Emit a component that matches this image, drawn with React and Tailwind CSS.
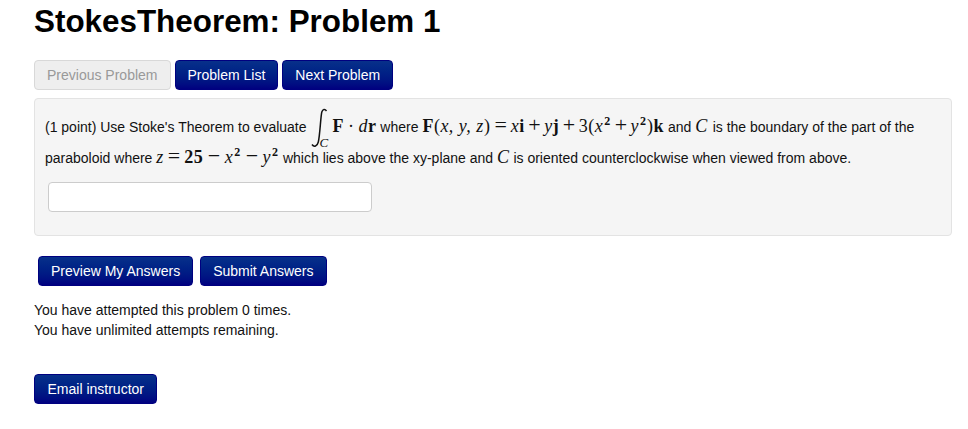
const Btn = ({ children, className = "" }) => (
  <button className={`h-[30px] rounded-[4px] border border-[#000080] bg-gradient-to-b from-[#08308a] to-[#000080] px-3 text-[14px] text-white ${className}`}>
    {children}
  </button>
);

const M = ({ children, className = "" }) => <span className={`font-['Liberation_Serif',serif] text-[18px] tracking-[0.5px] italic ${className}`}>{children}</span>;
const B = ({ children }) => <span className="font-['Liberation_Serif',serif] text-[18px] tracking-[0.5px] font-bold">{children}</span>;
const R = ({ children, className = "" }) => <span className={`font-['Liberation_Serif',serif] text-[18px] tracking-[0.5px] ${className}`}>{children}</span>;
const Op = ({ children, className = "mx-[4px]" }) => <span className={`font-['Liberation_Serif',serif] text-[22px] leading-none ${className}`}>{children}</span>;
const Sup = ({ children }) => <sup className="top-[-7px] pr-[1px] pl-[1px] font-['Liberation_Serif',serif] text-[12px] font-bold leading-none">{children}</sup>;

const Integral = () => (
  <span className="relative inline-block h-[1px] w-[22px]">
    <svg className="absolute bottom-[-16px] left-0" width="19" height="40" viewBox="0 0 19 40" fill="none" stroke="#111111">
      <path d="M16.5 3 C15 0.8 12.8 1 11.8 4 C10.6 9 10 27 8.3 34 C7.2 38.5 4 39.5 2 36.5" strokeWidth="1.5" />
    </svg>
    <span className="absolute bottom-[-17px] left-[9px] font-['Liberation_Serif',serif] text-[13px] italic leading-none">C</span>
  </span>
);

const App = () => {
  return (
    <div className="h-[429px] overflow-hidden bg-white pl-[34px] pr-4 font-['Liberation_Sans',Arial,sans-serif] text-[14px] text-[#111111]">
      <h1 className="pt-[2px] text-[31.4px] leading-[40px] font-bold text-black">StokesTheorem: Problem 1</h1>

      <div className="mt-[18px] flex gap-1">
        <button className="h-[30px] rounded-[4px] border border-[#d8d8d8] bg-[#eeeeee] px-3 text-[14px] text-[#999999]">Previous Problem</button>
        <Btn>Problem List</Btn>
        <Btn>Next Problem</Btn>
      </div>

      <div className="mt-2 h-[138px] w-[918px] rounded-[4px] border border-[#e3e3e3] bg-[#f5f5f5] px-[10px]">
        <p className="h-[43px] whitespace-pre pt-[12px] leading-[31px]">
          (1 point) Use Stoke's Theorem to evaluate <Integral /><B>F</B><R className="mx-[-1px]"> · </R><M>d</M><B>r</B> where <B>F</B><R>(</R><M>x, y, z</M><R>)</R><Op>=</Op><M>x</M><B>i</B><Op className="mx-[3.5px]">+</Op><M>y</M><B>j</B><Op className="mx-[3.5px]">+</Op><R>3(</R><M>x</M><Sup>2</Sup><Op className="mx-[3.5px]">+</Op><M>y</M><Sup>2</Sup><R>)</R><B>k</B> and <M className="mr-[1px]">C</M> is the boundary of the part of the
        </p>
        <p className="whitespace-pre leading-[31px]">
          paraboloid where <M>z</M><Op>=</Op><B>25</B><Op className="mx-[4.5px]">−</Op><M>x</M><Sup>2</Sup><Op className="mx-[4.5px]">−</Op><M>y</M><Sup>2</Sup> which lies above the xy-plane and <M>C</M> is oriented counterclockwise when viewed from above.
        </p>
        <input className="mt-[8px] ml-[3px] block h-[30px] w-[324px] rounded-[4px] border border-[#cccccc] bg-white" />
      </div>

      <div className="mt-5 ml-1 flex gap-[7px]">
        <Btn>Preview My Answers</Btn>
        <Btn>Submit Answers</Btn>
      </div>

      <p className="mt-[14px] leading-[20px]">You have attempted this problem 0 times.<br />You have unlimited attempts remaining.</p>

      <Btn className="mt-[34px] px-[12.5px]">Email instructor</Btn>
    </div>
  );
};

export default App;
